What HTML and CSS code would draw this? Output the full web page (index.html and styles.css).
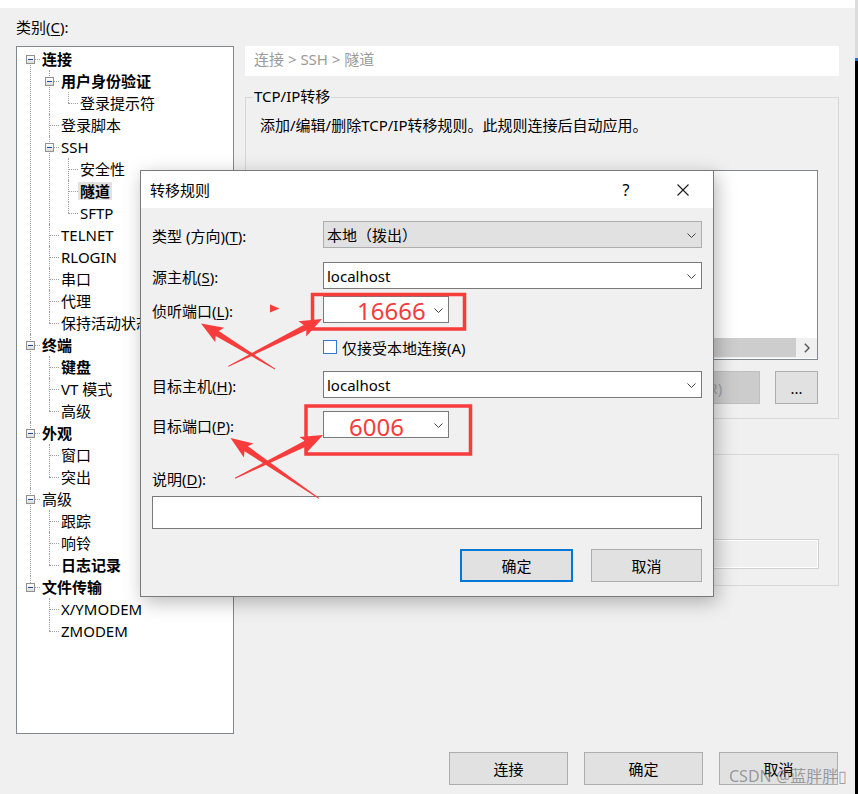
FILE: index.html
```html
<!DOCTYPE html>
<html lang="zh-CN">
<head>
<meta charset="utf-8">
<title>会话属性 - 隧道</title>
<link rel="stylesheet" href="styles.css">
</head>
<body>
<div class="app">
  <div class="topbar"></div>
  <div class="cat">类别(<u>C</u>):</div>
  <div class="main">
    <div class="tree">
      <ul class="troot">
        <li><div class="row"><span class="gut"><i class="exp"></i></span><span class="lbl b">连接</span></div>
          <ul>
            <li><div class="row"><span class="gut"><i class="exp"></i></span><span class="lbl b">用户身份验证</span></div>
              <ul>
                <li><div class="row"><span class="gut"></span><span class="lbl">登录提示符</span></div></li>
              </ul>
            </li>
            <li><div class="row"><span class="gut"></span><span class="lbl">登录脚本</span></div></li>
            <li><div class="row"><span class="gut"><i class="exp"></i></span><span class="lbl">SSH</span></div>
              <ul>
                <li><div class="row"><span class="gut"></span><span class="lbl">安全性</span></div></li>
                <li><div class="row"><span class="gut"></span><span class="lbl b sel">隧道</span></div></li>
                <li><div class="row"><span class="gut"></span><span class="lbl">SFTP</span></div></li>
              </ul>
            </li>
            <li><div class="row"><span class="gut"></span><span class="lbl">TELNET</span></div></li>
            <li><div class="row"><span class="gut"></span><span class="lbl">RLOGIN</span></div></li>
            <li><div class="row"><span class="gut"></span><span class="lbl">串口</span></div></li>
            <li><div class="row"><span class="gut"></span><span class="lbl">代理</span></div></li>
            <li><div class="row"><span class="gut"></span><span class="lbl">保持活动状态</span></div></li>
          </ul>
        </li>
        <li><div class="row"><span class="gut"><i class="exp"></i></span><span class="lbl b">终端</span></div>
          <ul>
            <li><div class="row"><span class="gut"></span><span class="lbl b">键盘</span></div></li>
            <li><div class="row"><span class="gut"></span><span class="lbl">VT 模式</span></div></li>
            <li><div class="row"><span class="gut"></span><span class="lbl">高级</span></div></li>
          </ul>
        </li>
        <li><div class="row"><span class="gut"><i class="exp"></i></span><span class="lbl b">外观</span></div>
          <ul>
            <li><div class="row"><span class="gut"></span><span class="lbl">窗口</span></div></li>
            <li><div class="row"><span class="gut"></span><span class="lbl">突出</span></div></li>
          </ul>
        </li>
        <li><div class="row"><span class="gut"><i class="exp"></i></span><span class="lbl">高级</span></div>
          <ul>
            <li><div class="row"><span class="gut"></span><span class="lbl">跟踪</span></div></li>
            <li><div class="row"><span class="gut"></span><span class="lbl">响铃</span></div></li>
            <li><div class="row"><span class="gut"></span><span class="lbl b">日志记录</span></div></li>
          </ul>
        </li>
        <li><div class="row"><span class="gut"><i class="exp"></i></span><span class="lbl b">文件传输</span></div>
          <ul>
            <li><div class="row"><span class="gut"></span><span class="lbl">X/YMODEM</span></div></li>
            <li><div class="row"><span class="gut"></span><span class="lbl">ZMODEM</span></div></li>
          </ul>
        </li>
      </ul>
    </div>

    <div class="right">
      <div class="crumb">连接 &gt; SSH &gt; 隧道</div>
      <div class="group g1">
        <div class="legend">TCP/IP转移</div>
        <div class="desc">添加/编辑/删除TCP/IP转移规则。此规则连接后自动应用。</div>
        <div class="list">
          <div class="hscroll">
            <div class="thumb"></div>
            <div class="sarrow"><svg width="6" height="10" viewBox="0 0 6 10"><path d="M0.8 0.8 L5 5 L0.8 9.2" fill="none" stroke="#555" stroke-width="1.4"/></svg></div>
          </div>
        </div>
        <div class="btnrow">
          <div class="btn w124">添加(A)</div>
          <div class="btn w124">编辑(E)</div>
          <div class="btn w124 dis">删除(R)</div>
          <div class="btn dots">...</div>
        </div>
      </div>
      <div class="group g2">
        <div class="legend">X11转移</div>
        <div class="tbox"></div>
      </div>
    </div>
  </div>
  <div class="footer">
    <div class="btn fbtn">连接</div>
    <div class="btn fbtn">确定</div>
    <div class="btn fbtn">取消</div>
  </div>
</div>
<div class="edge"><div class="edge-top"></div><div class="edge-blue"></div></div>

<div class="dialog">
  <div class="dtitle">
    <span class="t">转移规则</span>
    <span class="help">?</span>
    <span class="close"><svg width="12" height="12" viewBox="0 0 12 12"><path d="M0.5 0.5 L11.5 11.5 M11.5 0.5 L0.5 11.5" stroke="#1a1a1a" stroke-width="1.1"/></svg></span>
  </div>
  <div class="dbody">
    <div class="drow">
      <span class="dlabel">类型 (方向)(<u>T</u>):</span>
      <div class="combo ddl"><span class="v">本地（拨出）</span><svg class="chev" width="9" height="5" viewBox="0 0 9 5"><path d="M0.5 0.5 L4.5 4.5 L8.5 0.5" fill="none" stroke="#444"/></svg></div>
    </div>
    <div class="drow r2">
      <span class="dlabel">源主机(<u>S</u>):</span>
      <div class="combo"><span class="v">localhost</span><svg class="chev" width="9" height="5" viewBox="0 0 9 5"><path d="M0.5 0.5 L4.5 4.5 L8.5 0.5" fill="none" stroke="#444"/></svg></div>
    </div>
    <div class="drow r3">
      <span class="dlabel">侦听端口(<u>L</u>):</span>
      <div class="combo short"><span class="v red p1">16666</span><svg class="chev" width="9" height="5" viewBox="0 0 9 5"><path d="M0.5 0.5 L4.5 4.5 L8.5 0.5" fill="none" stroke="#444"/></svg></div>
    </div>
    <div class="drow r4">
      <span class="dlabel"></span>
      <span class="cb"></span><span>仅接受本地连接(A)</span>
    </div>
    <div class="drow r5">
      <span class="dlabel">目标主机(<u>H</u>):</span>
      <div class="combo"><span class="v">localhost</span><svg class="chev" width="9" height="5" viewBox="0 0 9 5"><path d="M0.5 0.5 L4.5 4.5 L8.5 0.5" fill="none" stroke="#444"/></svg></div>
    </div>
    <div class="drow r6">
      <span class="dlabel">目标端口(<u>P</u>):</span>
      <div class="combo short"><span class="v red p2">6006</span><svg class="chev" width="9" height="5" viewBox="0 0 9 5"><path d="M0.5 0.5 L4.5 4.5 L8.5 0.5" fill="none" stroke="#444"/></svg></div>
    </div>
    <div class="dnote">说明(<u>D</u>):</div>
    <div class="dtext"></div>
    <div class="dbtns">
      <div class="btn ok">确定</div>
      <div class="btn cancel">取消</div>
    </div>
  </div>
</div>

<svg class="anno" width="858" height="794" viewBox="0 0 858 794">
  <g fill="none" stroke="#f83b3b" stroke-width="3.5">
    <rect x="312.5" y="294.5" width="152" height="34.5"/>
    <rect x="306" y="406" width="164.5" height="48"/>
  </g>
  <g fill="#f83b3b">
    <polygon points="0,0 22,-8.5 19,-3 87,-0.5 87,0.5 19,3 22,8.5" transform="translate(201 323.5) rotate(31.6)"/>
    <polygon points="0,0 22,-8.5 19,-3 105,-0.5 105,0.5 19,3 22,8.5" transform="translate(322 319) rotate(153.2)"/>
    <polygon points="0,0 22,-8.5 19,-3 107,-0.5 107,0.5 19,3 22,8.5" transform="translate(230.5 438) rotate(34.3)"/>
    <polygon points="0,0 22,-8.5 19,-3 98,-0.5 98,0.5 19,3 22,8.5" transform="translate(323 435) rotate(153.8)"/>
    <polygon points="270,304.5 279.5,308.5 270,312.5"/>
  </g>
</svg>

<div class="wm">CSDN @蓝胖胖▯</div>
</body>
</html>
```

FILE: styles.css
```css
* { box-sizing: border-box; }
html, body { margin: 0; padding: 0; }
body {
  width: 858px; height: 794px; overflow: hidden; position: relative;
  display: flex; background: #f0f0f0; color: #000;
  font-family: "Noto Sans", "Noto Sans CJK SC", sans-serif; font-size: 15px;
}
u { text-decoration: underline; text-underline-offset: 2px; }

.app { width: 855px; height: 794px; flex: none; display: flex; flex-direction: column; }
.edge { width: 3px; flex: none; display: flex; flex-direction: column; background: #000; }
.edge-top { height: 58px; background: #dcdcdc; }
.edge-blue { height: 3px; background: #1c6fd0; }

.topbar { height: 8px; background: #fff; flex: none; }
.cat { height: 38px; padding: 9px 0 0 16px; line-height: 20px; flex: none; }
.main { display: flex; gap: 11px; padding-left: 16px; height: 688px; flex: none; }

/* tree */
.tree { width: 218px; height: 688px; background: #fff; border: 1px solid #828790; overflow: hidden; padding: 1px 0 0 4px; flex: none; }
.troot, .troot ul { list-style: none; margin: 0; padding: 0; }
.troot ul { padding-left: 19px; }
.troot li { position: relative; }
.troot li::before { content: ""; position: absolute; left: 9px; top: 0; bottom: 0; border-left: 1px dotted #a0a0a0; }
.troot li:last-child::before { bottom: auto; height: 11px; }
.troot > li:first-child::before { top: 11px; }
.row { display: flex; align-items: center; height: 22px; white-space: nowrap; }
.gut { width: 19px; height: 22px; flex: none; position: relative; display: flex; align-items: center; justify-content: center; }
.gut::after { content: ""; position: absolute; left: 9px; right: 0; top: 11px; border-top: 1px dotted #a0a0a0; }
.exp { width: 9px; height: 9px; border: 1px solid #919191; background: linear-gradient(#ffffff, #dcdcdc); position: relative; z-index: 1; display: flex; align-items: center; justify-content: center; }
.exp::after { content: ""; width: 5px; height: 1px; background: #1f4aa8; }
.lbl { padding: 0 2px; height: 18px; line-height: 18px; }
.b { font-weight: 700; }
.sel { background: #e2e2e2; }

/* right side */
.right { width: 594px; flex: none; display: flex; flex-direction: column; }
.crumb { height: 30px; background: #fff; color: #9a9a9a; padding-left: 9px; line-height: 27px; }
.group { border: 1px solid #d7d7d7; }
.g1 { height: 322px; margin-top: 21px; }
.g2 { height: 132px; margin-top: 35px; }
.legend { width: max-content; margin: -12px 0 0 7px; padding: 0 1px; line-height: 20px; height: 20px; background: #f0f0f0; }
.desc { margin: 9px 0 0 14px; line-height: 20px; }
.list { margin: 35px 0 0 14px; width: 558px; height: 190px; border: 1px solid #828790; background: #fff; display: flex; flex-direction: column; justify-content: flex-end; }
.hscroll { height: 20px; margin-bottom: 1px; display: flex; background: #f0f0f0; }
.thumb { flex: 1; margin: 0 0 1px 20px; background: #cdcdcd; }
.sarrow { width: 21px; display: flex; align-items: center; justify-content: center; }
.btnrow { display: flex; justify-content: flex-end; gap: 15px; margin: 11px 0 0 14px; width: 558px; }
.btn { height: 33px; border: 1px solid #adadad; background: #e1e1e1; display: flex; align-items: center; justify-content: center; white-space: nowrap; }
.w124 { width: 124px; }
.dots { width: 43px; }
.dis { background: #cccccc; border-color: #bfbfbf; color: #a0a0a0; }
.tbox { margin: 76px 0 0 34px; width: 539px; height: 30px; border: 1px solid #d0d0d0; box-shadow: inset 0 0 0 1px #fff; }

.footer { display: flex; justify-content: flex-end; gap: 16px; padding-right: 17px; margin-top: 18px; }
.fbtn { width: 119px; }

/* dialog */
.dialog { position: absolute; left: 140px; top: 170px; width: 574px; height: 427px; border: 1px solid #7a7a7a; background: #f0f0f0; box-shadow: 3px 5px 18px rgba(0,0,0,0.28); display: flex; flex-direction: column; z-index: 5; }
.dtitle { height: 37px; background: #fff; display: flex; align-items: center; padding-left: 9px; flex: none; }
.dtitle .t { flex: 1; }
.help { width: 30px; text-align: center; font-size: 16px; }
.close { width: 30px; margin: 0 15px 0 27px; display: flex; justify-content: center; }
.dbody { padding: 13px 11px 0 11px; }
.drow { display: flex; align-items: center; height: 27px; white-space: nowrap; }
.r2 { margin-top: 14px; }
.r3 { margin-top: 7px; }
.r4 { margin-top: 13px; height: 22px; }
.r5 { margin-top: 13px; }
.r6 { margin-top: 13px; }
.dlabel { width: 171px; flex: none; padding-top: 1px; }
.combo { flex: 1; height: 27px; border: 1px solid #7a7a7a; background: #fff; display: flex; align-items: center; padding: 0 5px 0 3px; }
.combo .v { flex: 1; }
.ddl { background: #e1e1e1; border-color: #adadad; }
.chev { flex: none; margin-top: 2px; }
.short { flex: none; width: 126px; }
.red { color: #f53c3c; font-size: 24px; line-height: 25px; padding-top: 2px; }
.p1 { padding-left: 30px; }
.p2 { padding-left: 22px; padding-top: 4px; }
.cb { width: 14px; height: 14px; border: 1px solid #3078d0; background: #fff; margin-right: 5px; flex: none; }
.dnote { margin-top: 31px; line-height: 20px; }
.dtext { margin-top: 7px; height: 33px; border: 1px solid #7a7a7a; background: #fff; }
.dbtns { display: flex; justify-content: flex-end; gap: 18px; margin-top: 20px; }
.ok { width: 113px; border: 2px solid #0078d7; }
.cancel { width: 111px; }

/* overlays */
.anno { position: absolute; left: 0; top: 0; z-index: 8; pointer-events: none; }
.wm { position: absolute; left: 729px; top: 766px; line-height: 20px; font-size: 16px; color: rgba(105,105,105,0.62); z-index: 10; white-space: nowrap; }
```
